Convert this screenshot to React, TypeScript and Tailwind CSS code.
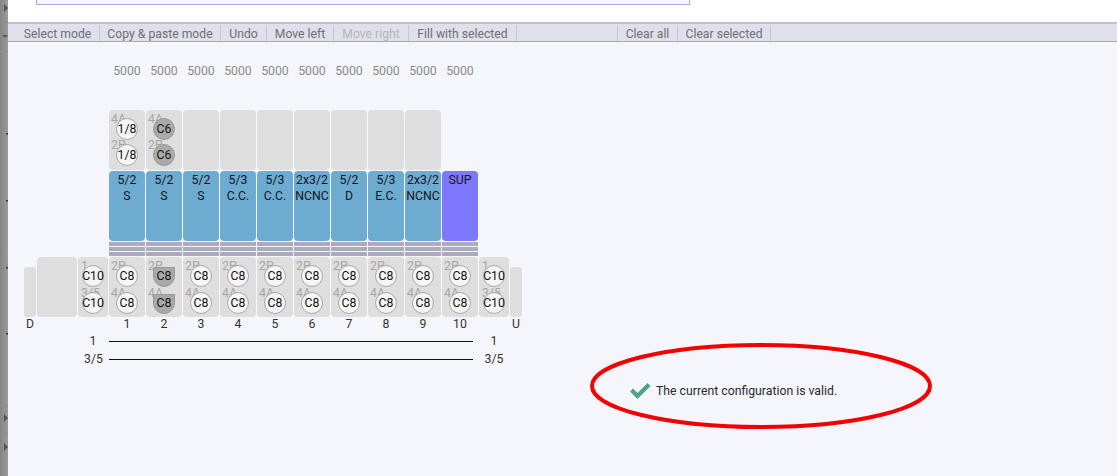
import React from "react";

const font = { fontFamily: "Roboto, 'Liberation Sans', sans-serif" };

function Breaker({ label, text, state, top, labelTop }: { label: string; text: string; state?: "gray" | "shield"; top: string; labelTop: string }) {
  const base = "absolute left-[7px] w-[22px] flex items-center justify-center border text-[12.25px] leading-none text-[#111]";
  const cls =
    state === "gray"
      ? "h-[22px] rounded-full bg-[#aaaaaa] border-[#999999]"
      : state === "shield"
      ? "h-[20px] pb-[2px] rounded-b-full bg-[#a9a9a9] border-[#999999]"
      : "h-[22px] rounded-full bg-[#f6f6f6] border-[#a8a8a8]";
  return (
    <>
      <span className={`absolute left-[2px] text-[12.25px] leading-[14px] text-[#a6a6a6] ${labelTop}`}>{label}</span>
      <span className={`${base} ${cls} ${top}`}>{text}</span>
    </>
  );
}

function SideBreaker({ label, top, labelTop }: { label: string; top: string; labelTop: string }) {
  return (
    <>
      <span className={`absolute left-[3px] text-[12.25px] leading-[14px] text-[#a6a6a6] ${labelTop}`}>{label}</span>
      <span className={`absolute left-[4px] w-[22px] h-[22px] flex items-center justify-center rounded-full border border-[#a8a8a8] bg-[#f6f6f6] text-[12.25px] leading-none text-[#111] ${top}`}>C10</span>
    </>
  );
}

const mods: [string, string, boolean?][] = [
  ["5/2", "S"],
  ["5/2", "S"],
  ["5/2", "S"],
  ["5/3", "C.C."],
  ["5/3", "C.C."],
  ["2x3/2", "NCNC"],
  ["5/2", "D"],
  ["5/3", "E.C."],
  ["2x3/2", "NCNC"],
  ["SUP", "", true],
];

const tools: { t: string; w: string; dim?: boolean }[] = [
  { t: "Select mode", w: "w-[84px]" },
  { t: "Copy & paste mode", w: "w-[121px]" },
  { t: "Undo", w: "w-[46px]" },
  { t: "Move left", w: "w-[67px]" },
  { t: "Move right", w: "w-[75px]", dim: true },
  { t: "Fill with selected", w: "w-[108px]" },
];

function Tool({ t, w, dim }: { t: string; w: string; dim?: boolean }) {
  return (
    <div className={`h-full flex items-center justify-center pt-[2px] border-r border-[#c6c6d4] whitespace-nowrap ${w} ${dim ? "text-[#b5b5b8]" : "text-[#6e6e74]"}`}>{t}</div>
  );
}

function Rail({ left, right }: { left: string; right: string }) {
  return (
    <div className="flex items-center h-[18px] text-[#333]">
      <div className="w-[85px] pl-[60px] pr-[7px] text-center">{left}</div>
      <div className="w-[364px] h-px bg-[#111]" />
      <div className="w-[31px] pl-[11px] text-center">{right}</div>
    </div>
  );
}

export default function App() {
  return (
    <div style={font} className="relative flex w-[1117px] h-[476px] overflow-hidden bg-[#f5f6fc]">
      <aside className="w-[8px] h-full shrink-0 bg-gradient-to-r from-[#858585] to-[#9b9b9b] flex flex-col items-center">
        <svg width="8" height="476" viewBox="0 0 8 476">
          <path d="M4 4 L8 8 L4 12Z M2 35 H8 L5 38Z M4 414 L8 418 L4 422Z M4 443 L8 447 L4 451Z" fill="#555" />
          <path d="M6 133h2v1.500h-2z M6 200h2v1.500h-2z M6 267h2v1.500h-2z M6 333h2v1.500h-2z" fill="#333" />
          <path d="M0 22.500H8 M0 51.500H8 M0 405H8 M0 433H8" stroke="#8a8a8a" />
        </svg>
      </aside>

      <main className="flex-1 flex flex-col min-w-0">
        <div className="h-[22px] bg-white shrink-0 pl-[28px]">
          <div className="w-[654px] h-[5px] border-x border-b border-[#a9a9f4] bg-[#f5f6fc]" />
        </div>

        <div className="h-[20px] shrink-0 flex bg-[#e0e0ec] border-t-2 border-t-[#c2c2c9] border-b border-b-[#a8a8ae] text-[12.2px] pt-px pl-[8px]">
          {tools.map((x) => (
            <Tool key={x.t} t={x.t} w={x.w} dim={x.dim} />
          ))}
          <div className="w-[101px] h-full border-r border-[#c6c6d4]" />
          <Tool t="Clear all" w="w-[60px]" />
          <Tool t="Clear selected" w="w-[93px]" />
        </div>

        <div className="flex-1 flex items-start pl-[16px] min-h-0">
          <div className="w-[498px] shrink-0 flex flex-col pt-[22px] text-[12.25px]">
            <div className="flex h-[14px] ml-[85px] gap-px leading-[14px] text-[#8a8a8a]">
              {mods.map((_, i) => (
                <div key={i} className="w-[36px] text-center">5000</div>
              ))}
            </div>

            <div className="flex gap-px ml-[85px] mt-[32px] h-[60px]">
              {mods.slice(0, 9).map((_, i) => (
                <div key={i} className="relative w-[36px] h-full rounded-[4px] bg-[#dedede]">
                  {i === 0 && (
                    <>
                      <Breaker label="4A" text="1/8" top="top-[8px]" labelTop="top-[2px]" />
                      <Breaker label="2P" text="1/8" top="top-[34px]" labelTop="top-[28px]" />
                    </>
                  )}
                  {i === 1 && (
                    <>
                      <Breaker label="4A" text="C6" state="gray" top="top-[8px]" labelTop="top-[2px]" />
                      <Breaker label="2P" text="C6" state="gray" top="top-[34px]" labelTop="top-[28px]" />
                    </>
                  )}
                </div>
              ))}
            </div>

            <div className="flex gap-px ml-[85px] mt-px h-[70px]">
              {mods.map((m, i) => (
                <div key={i} className={`w-[36px] h-full rounded-[4px] pt-px text-center leading-[16px] text-[#15151f] ${m[2] ? "bg-[#7e78ff]" : "bg-[#6eabd0]"}`}>
                  <div>{m[0]}</div>
                  <div>{m[1]}</div>
                </div>
              ))}
            </div>

            <div className="flex gap-px ml-[85px] mt-px h-[14px]">
              {mods.map((_, i) => (
                <div key={i} className="w-[36px] h-full flex flex-col gap-px">
                  <div className="h-[4px] bg-[#abaabf]" />
                  <div className="h-[4px] bg-[#abaabf]" />
                  <div className="h-[4px] bg-[#abaabf]" />
                </div>
              ))}
            </div>

            <div className="flex items-end gap-px h-[60px] mt-px">
              <div className="w-[12px] h-[50px] rounded-[3px] bg-[#dedede]" />
              <div className="w-[40px] h-[60px] rounded-[4px] bg-[#dedede]" />
              <div className="relative w-[30px] h-[60px] rounded-[4px] bg-[#dedede]">
                <SideBreaker label="1" top="top-[8px]" labelTop="top-[2px]" />
                <SideBreaker label="3/5" top="top-[35px]" labelTop="top-[29px]" />
              </div>
              {mods.map((_, i) => (
                <div key={i} className="relative w-[36px] h-[60px] rounded-[4px] bg-[#dedede]">
                  <Breaker label="2P" text="C8" state={i === 1 ? "shield" : undefined} top={i === 1 ? "top-[10px]" : "top-[8px]"} labelTop="top-[2px]" />
                  <Breaker label="4A" text="C8" state={i === 1 ? "shield" : undefined} top={i === 1 ? "top-[37px]" : "top-[35px]"} labelTop="top-[29px]" />
                </div>
              ))}
              <div className="relative w-[30px] h-[60px] rounded-[4px] bg-[#dedede]">
                <SideBreaker label="1" top="top-[8px]" labelTop="top-[2px]" />
                <SideBreaker label="3/5" top="top-[35px]" labelTop="top-[29px]" />
              </div>
              <div className="w-[12px] h-[50px] rounded-[3px] bg-[#dedede]" />
            </div>

            <div className="flex h-[14px] leading-[14px] text-[#333]">
              <div className="w-[85px] pl-[2px]">D</div>
              <div className="flex gap-px">
                {mods.map((_, i) => (
                  <div key={i} className="w-[36px] text-center">{i + 1}</div>
                ))}
              </div>
              <div className="ml-[31px] pl-[3px]">U</div>
            </div>

            <div className="mt-px">
              <Rail left="1" right="1" />
              <Rail left="3/5" right="3/5" />
            </div>
          </div>

          <div className="flex items-center gap-[5px] ml-[107px] mt-[339px] h-[20px] text-[12.25px] text-[#2a2a33] whitespace-nowrap">
            <svg width="22" height="18" viewBox="0 0 22 18">
              <path d="M1 9.500 L4 6.500 L8.500 11 L18.500 1 L21.500 4 L8.500 17 Z" fill="#4aa685" />
            </svg>
            <span>The current configuration is valid.</span>
          </div>
        </div>
      </main>

      <svg className="absolute left-[589px] top-[342px] pointer-events-none" width="344" height="88" viewBox="0 0 344 88">
        <ellipse cx="172" cy="44" rx="169" ry="41" fill="none" stroke="#f00000" strokeWidth="4" />
      </svg>
    </div>
  );
}
